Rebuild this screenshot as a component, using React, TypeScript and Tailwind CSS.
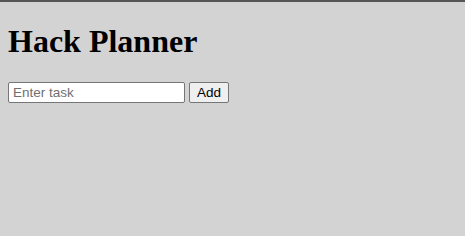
import { useState } from 'react';

export default function App() {
  const [task, setTask] = useState('');
  const [tasks, setTasks] = useState<string[]>([]);

  function add() {
    if (!task.trim()) return;
    setTasks([...tasks, task.trim()]);
    setTask('');
  }

  return (
    <div className="min-h-screen border-t-2 border-[#555555] bg-[#d3d3d3] px-2 font-['Liberation_Serif',serif] text-black">
      <h1 className="my-[21.44px] text-[32px] leading-[normal] font-bold">Hack Planner</h1>
      <div className="flex items-center gap-1">
        <input
          value={task}
          onChange={(e) => setTask(e.target.value)}
          placeholder="Enter task"
          className="h-[21px] w-[177px] rounded-[2px] border border-[#767676] bg-white px-[4px] font-['Liberation_Sans',Arial,sans-serif] text-[13.5px] leading-[normal] placeholder:text-[#707070]"
        />
        <button
          onClick={add}
          className="h-[21px] w-[40px] rounded-[2px] border border-[#767676] bg-[#efefef] px-[6px] font-['Liberation_Sans',Arial,sans-serif] text-[13.5px] leading-[normal]"
        >
          Add
        </button>
      </div>
      <ul>
        {tasks.map((t, i) => (
          <li key={i}>{t}</li>
        ))}
      </ul>
    </div>
  );
}
